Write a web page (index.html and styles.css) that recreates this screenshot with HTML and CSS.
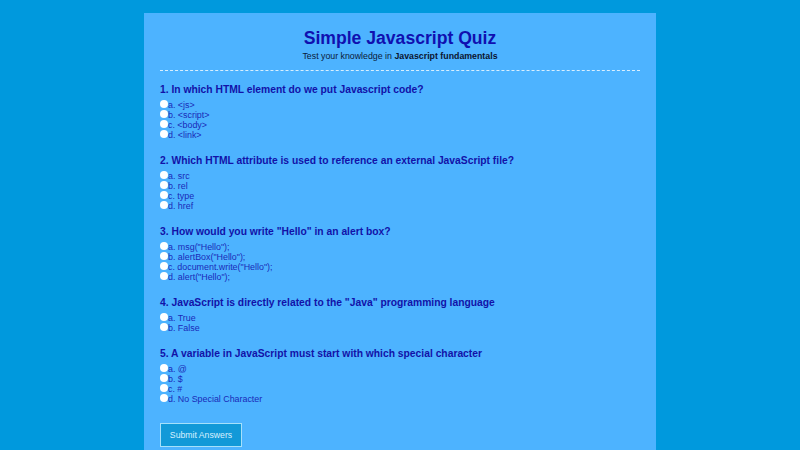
FILE: index.html
```html
<!DOCTYPE html>
<html>
<head>
<meta charset="utf-8">
<link rel="stylesheet" href="styles.css">
</head>
<body>
<div class="quiz">
  <header class="head">
    <h1 class="title">Simple Javascript Quiz</h1>
    <p class="sub">Test your knowledge in <strong>Javascript fundamentals</strong></p>
  </header>
  <form class="form">
    <div class="q">
      <h3 class="qt">1. In which HTML element do we put Javascript code?</h3>
      <label class="opt"><input type="radio" name="q1">a. &lt;js&gt;</label>
      <label class="opt"><input type="radio" name="q1">b. &lt;script&gt;</label>
      <label class="opt"><input type="radio" name="q1">c. &lt;body&gt;</label>
      <label class="opt"><input type="radio" name="q1">d. &lt;link&gt;</label>
    </div>
    <div class="q">
      <h3 class="qt">2. Which HTML attribute is used to reference an external JavaScript file?</h3>
      <label class="opt"><input type="radio" name="q2">a. src</label>
      <label class="opt"><input type="radio" name="q2">b. rel</label>
      <label class="opt"><input type="radio" name="q2">c. type</label>
      <label class="opt"><input type="radio" name="q2">d. href</label>
    </div>
    <div class="q">
      <h3 class="qt">3. How would you write "Hello" in an alert box?</h3>
      <label class="opt"><input type="radio" name="q3">a. msg("Hello");</label>
      <label class="opt"><input type="radio" name="q3">b. alertBox("Hello");</label>
      <label class="opt"><input type="radio" name="q3">c. document.write("Hello");</label>
      <label class="opt"><input type="radio" name="q3">d. alert("Hello");</label>
    </div>
    <div class="q">
      <h3 class="qt">4. JavaScript is directly related to the "Java" programming language</h3>
      <label class="opt"><input type="radio" name="q4">a. True</label>
      <label class="opt"><input type="radio" name="q4">b. False</label>
    </div>
    <div class="q">
      <h3 class="qt">5. A variable in JavaScript must start with which special character</h3>
      <label class="opt"><input type="radio" name="q5">a. @</label>
      <label class="opt"><input type="radio" name="q5">b. $</label>
      <label class="opt"><input type="radio" name="q5">c. #</label>
      <label class="opt"><input type="radio" name="q5">d. No Special Character</label>
    </div>
    <button type="button" class="submit">Submit Answers</button>
  </form>
</div>
</body>
</html>
```
FILE: styles.css
```css
html, body {
  margin: 0;
  padding: 0;
  background: #0099dd;
  font-family: "Liberation Sans", Arial, sans-serif;
  color: #1010a0;
}
.quiz {
  width: 480px;
  margin: 13px auto 0;
  padding: 13px 16px 20px;
  background: #4db3ff;
  min-height: 420px;
}
.head {
  text-align: center;
  border-bottom: 1px dashed #d8efff;
  padding-bottom: 7px;
}
.title {
  margin: 0;
  font-size: 17.6px;
  line-height: 24px;
  color: #1010b0;
}
.sub {
  margin: 0;
  font-size: 8.8px;
  line-height: 13px;
  color: #0a1a3a;
}
.sub strong {
  color: #0a1530;
}
.form {
  padding-top: 10.5px;
}
.q {
  margin-bottom: 12.5px;
}
.qt {
  margin: 0 0 3.5px;
  font-size: 10.3px;
  line-height: 15px;
  color: #1212a8;
}
.opt {
  display: flex;
  align-items: center;
  font-size: 8.9px;
  line-height: 10px;
  height: 10px;
  color: #1a2ab8;
}
.opt input {
  -webkit-appearance: none;
  appearance: none;
  width: 8px;
  height: 8px;
  margin: -2px 0 0 0;
  border-radius: 50%;
  background: #ffffff;
  border: none;
  flex: none;
}
.submit {
  margin-top: 6.5px;
  width: 82px;
  height: 24px;
  padding: 0;
  background: #1299d8;
  border: 1px solid #a6e0fa;
  color: #d8f0ff;
  font-family: "Liberation Sans", Arial, sans-serif;
  font-size: 8.7px;
}
```
